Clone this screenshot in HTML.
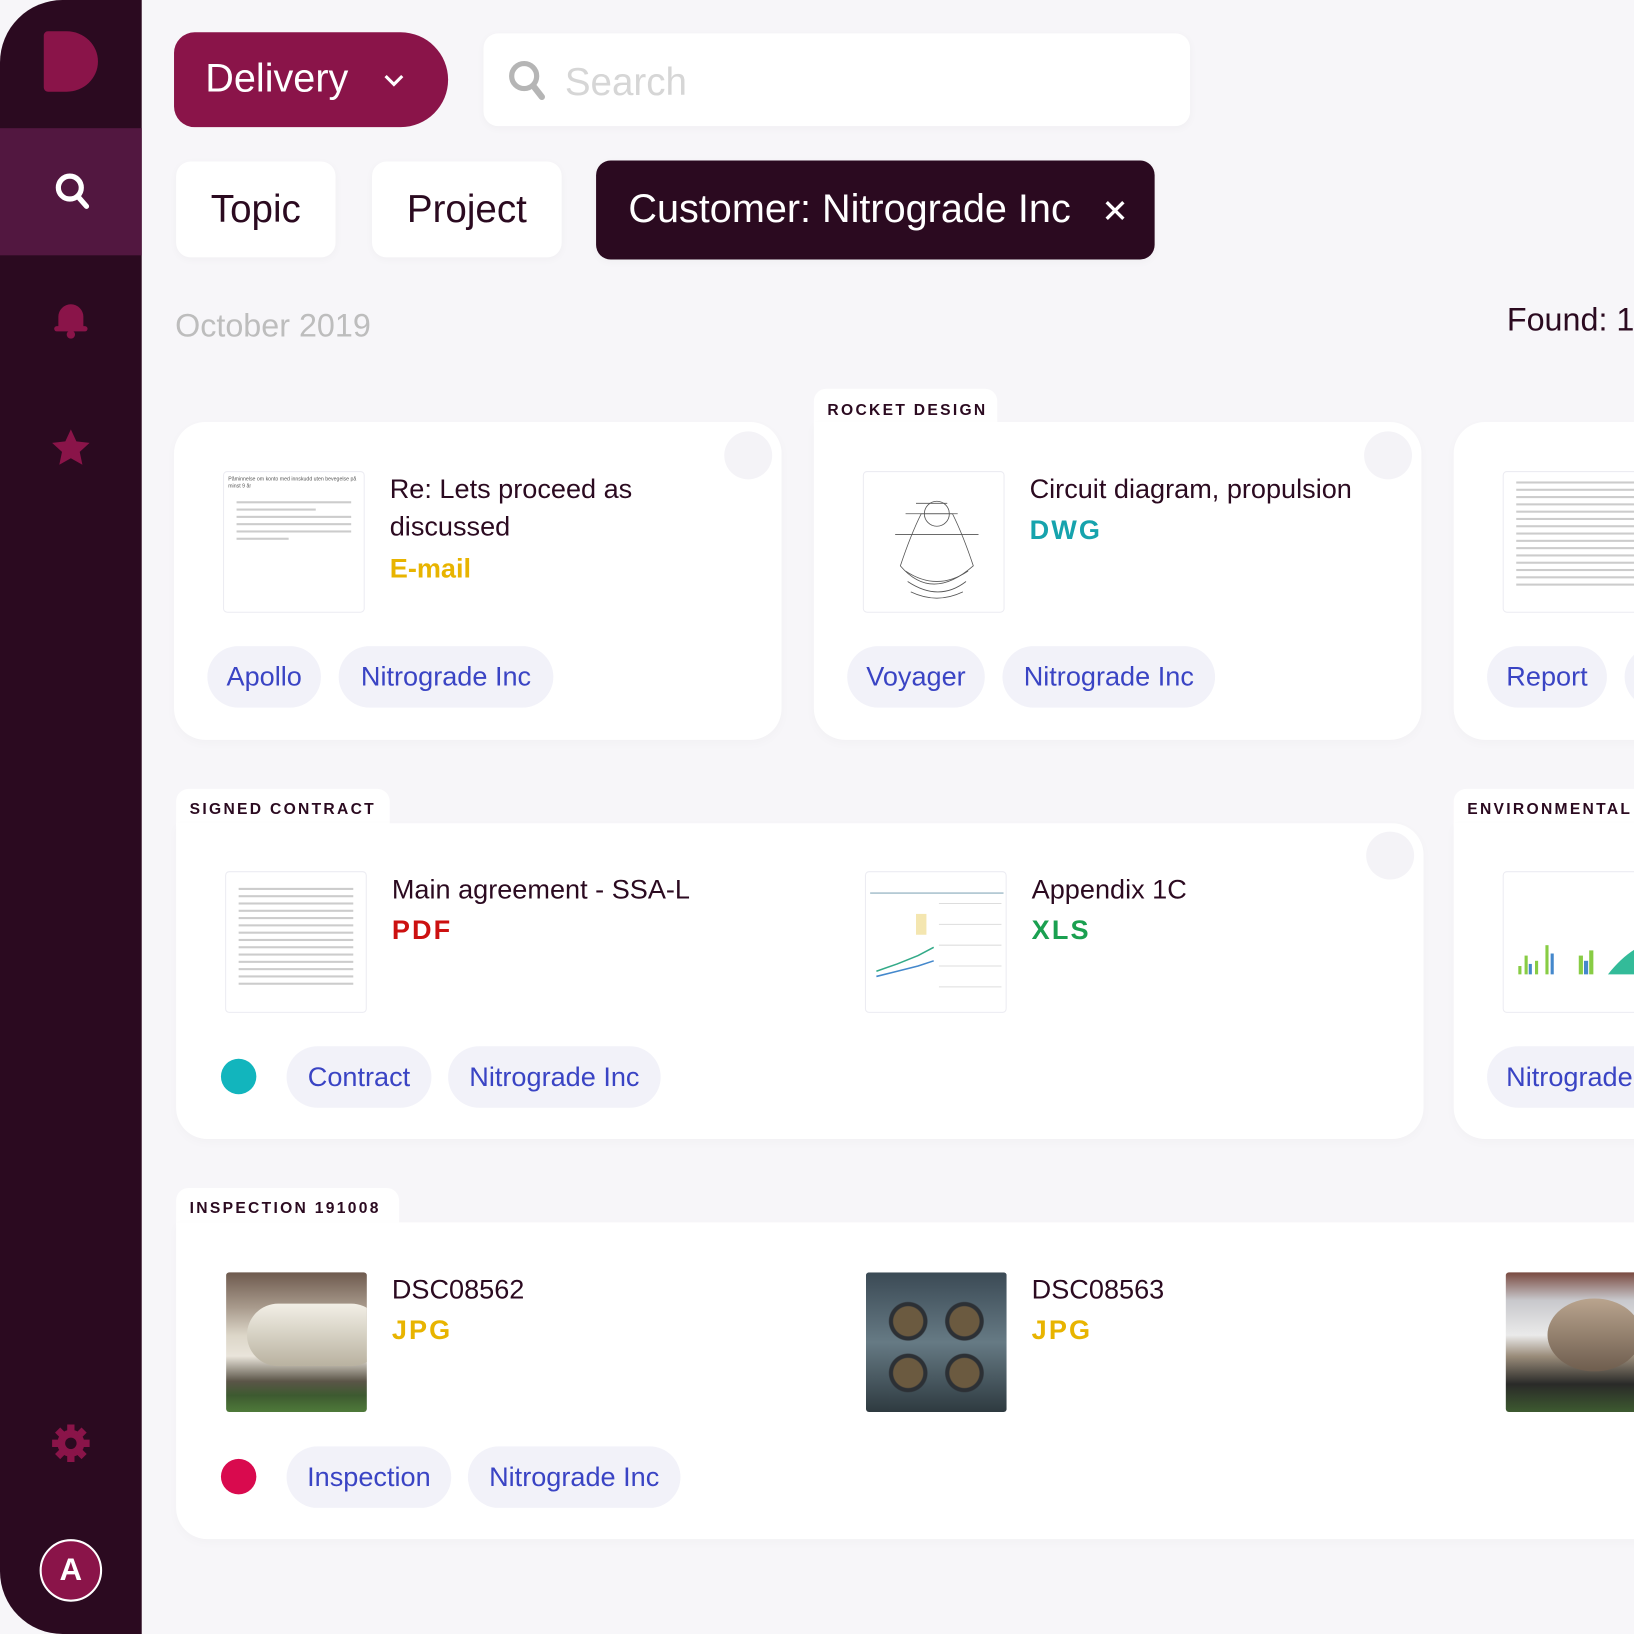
<!DOCTYPE html>
<html><head><meta charset="utf-8">
<style>
html,body{margin:0;padding:0;width:1634px;height:1634px;overflow:hidden;background:#fff;}
#w{position:absolute;left:0;top:0;width:1568px;height:1568px;transform:scale(1.04209);transform-origin:0 0;background:#f7f6f9;font-family:"Liberation Sans",sans-serif;overflow:hidden;}
.a{position:absolute;}
#sb{left:0;top:0;width:136px;height:1568px;background:#2b0a20;border-radius:60px 0 0 60px;}
.pill{position:absolute;background:#fff;border-radius:14px;box-shadow:0 2px 8px rgba(0,0,0,.03);color:#2b0a20;font-size:37px;display:flex;align-items:center;justify-content:center;}
.card{position:absolute;background:#fff;border-radius:30px;box-shadow:0 3px 10px rgba(0,0,0,.025);}
.tab{position:absolute;background:#fff;border-radius:12px 12px 0 0;font-size:15px;font-weight:bold;letter-spacing:2.2px;color:#2b0a20;padding-left:13px;box-sizing:border-box;line-height:40px;white-space:nowrap;}
.th{position:absolute;width:136px;height:136px;border:1.5px solid #ececf2;border-radius:4px;background:#fff;box-sizing:border-box;overflow:hidden;}
.t{position:absolute;font-size:26px;color:#2b0a20;line-height:36px;white-space:nowrap;}
.ty{position:absolute;font-size:26px;font-weight:bold;letter-spacing:2px;}
.tag{position:absolute;height:59px;border-radius:30px;background:#f2f2f9;color:#3a44c4;font-size:26px;display:flex;align-items:center;justify-content:center;white-space:nowrap;}
.circ{position:absolute;width:46px;height:46px;border-radius:50%;background:#f4f3f7;}
.ln{height:2px;background:#ccc;margin:5px 8px;}
</style></head><body><div id="w">
<div id="sb" class="a"></div>
<div class="a" style="left:0;top:123px;width:136px;height:122px;background:#521740"></div>
<div class="a" style="left:42px;top:30px;width:52px;height:58px;background:#8a1449;border-radius:4px 30px 30px 4px/4px 29px 29px 4px"></div>
<svg class="a" style="left:50px;top:163px" width="40" height="40" viewBox="0 0 40 40"><circle cx="17" cy="17" r="11" fill="none" stroke="#fff" stroke-width="5"/><line x1="26" y1="27" x2="33" y2="35" stroke="#fff" stroke-width="5" stroke-linecap="round"/></svg>
<svg class="a" style="left:48px;top:286px" width="40" height="40" viewBox="0 0 40 40"><path d="M8 29 V18 a12 12 0 0 1 24 0 V29 Z" fill="#8a1449"/><rect x="4" y="27" width="32" height="5" rx="2.5" fill="#8a1449"/><circle cx="20" cy="35" r="4" fill="#8a1449"/></svg>
<svg class="a" style="left:48px;top:410px" width="40" height="40" viewBox="0 0 40 40"><path d="M20 2 L25.3 13.6 L38 15 L28.5 23.6 L31.1 36 L20 29.7 L8.9 36 L11.5 23.6 L2 15 L14.7 13.6 Z" fill="#8a1449"/></svg>
<svg class="a" style="left:48px;top:1365px" width="40" height="40" viewBox="0 0 40 40"><g fill="#8a1449"><circle cx="20" cy="20" r="13"/><g stroke="#8a1449" stroke-width="7"><line x1="20" y1="2" x2="20" y2="38"/><line x1="2" y1="20" x2="38" y2="20"/><line x1="7.3" y1="7.3" x2="32.7" y2="32.7"/><line x1="32.7" y1="7.3" x2="7.3" y2="32.7"/></g></g><circle cx="20" cy="20" r="5.5" fill="#2b0a20"/></svg>
<div class="a" style="left:38px;top:1477px;width:56px;height:56px;border:2.5px solid #fff;border-radius:50%;background:#8a1449;color:#fff;font-size:30px;font-weight:bold;display:flex;align-items:center;justify-content:center"><span>A</span></div>

<div class="a" style="left:167px;top:31px;width:263px;height:91px;background:#8a1449;border-radius:20px 46px 46px 20px;color:#fff;font-size:38px;"><span class="a" style="left:30px;top:24px">Delivery</span><svg class="a" style="left:200px;top:38px" width="22" height="16" viewBox="0 0 22 16"><path d="M3 4 L11 12 L19 4" fill="none" stroke="#fff" stroke-width="3"/></svg></div>
<div class="a" style="left:464px;top:32px;width:678px;height:89px;background:#fff;border-radius:14px;box-shadow:0 2px 8px rgba(0,0,0,.03)"><svg class="a" style="left:22px;top:24px" width="42" height="44" viewBox="0 0 42 44"><circle cx="17" cy="17" r="12" fill="none" stroke="#b5b5b5" stroke-width="5"/><line x1="27" y1="28" x2="34" y2="37" stroke="#b5b5b5" stroke-width="6" stroke-linecap="round"/></svg><span class="a" style="left:78px;top:26px;font-size:37px;color:#d6d6d6">Search</span></div>

<div class="pill" style="left:169px;top:155px;width:153px;height:92px">Topic</div>
<div class="pill" style="left:357px;top:155px;width:182px;height:92px">Project</div>
<div class="pill" style="left:572px;top:154px;width:536px;height:95px;background:#2b0a20;color:#fff;justify-content:flex-start"><span style="margin-left:31px;font-size:38px">Customer: Nitrograde Inc</span><svg class="a" style="left:487px;top:37px" width="22" height="22" viewBox="0 0 22 22"><path d="M3 3 L19 19 M19 3 L3 19" stroke="#fff" stroke-width="3.2"/></svg></div>

<div class="a" style="left:168px;top:295px;font-size:31px;color:#bdbdbd">October 2019</div>
<div class="a" style="left:1446px;top:289px;font-size:31px;color:#2b0a20;white-space:nowrap">Found: 1</div>

<!-- row 1 -->
<div class="card" style="left:167px;top:405px;width:583px;height:305px"></div>
<div class="circ" style="left:695px;top:414px"></div>
<div class="th" style="left:214px;top:452px;padding:4px"><div style="font-size:5px;color:#555;line-height:7px">Påminnelse om konto med innskudd uten bevegelse på minst 9 år</div><div class="ln" style="margin-top:10px"></div><div class="ln" style="width:60%"></div><div class="ln"></div><div class="ln"></div><div class="ln"></div><div class="ln" style="width:40%"></div></div>
<div class="t" style="left:374px;top:451px">Re: Lets proceed as<br>discussed</div>
<div class="ty" style="left:374px;top:530px;color:#e8b400;letter-spacing:0">E-mail</div>
<div class="tag" style="left:199px;top:620px;width:109px">Apollo</div>
<div class="tag" style="left:325px;top:620px;width:206px">Nitrograde Inc</div>

<div class="tab" style="left:781px;top:373px;width:176px;height:36px;line-height:42px">ROCKET DESIGN</div>
<div class="card" style="left:781px;top:405px;width:583px;height:305px;border-top-left-radius:0"></div>
<div class="circ" style="left:1309px;top:414px"></div>
<div class="th" style="left:828px;top:452px"><svg width="136" height="136" viewBox="0 0 136 136"><g fill="none" stroke="#555" stroke-width="0.8"><path d="M40 40 h50 M50 30 h30 M30 60 h80"/><path d="M55 40 q-10 20 -20 50 q30 35 70 0 q-10 -30 -20 -50 Z"/><path d="M40 95 q30 20 60 0 M42 105 q30 20 56 0 M45 115 q25 12 50 0"/><circle cx="70" cy="40" r="12"/></g></svg></div>
<div class="t" style="left:988px;top:451px">Circuit diagram, propulsion</div>
<div class="ty" style="left:988px;top:493px;color:#16a3ad">DWG</div>
<div class="tag" style="left:813px;top:620px;width:132px">Voyager</div>
<div class="tag" style="left:962px;top:620px;width:204px">Nitrograde Inc</div>

<div class="card" style="left:1395px;top:405px;width:300px;height:305px"></div>
<div class="th" style="left:1442px;top:452px;width:140px;padding:4px"><div class="ln"></div><div class="ln"></div><div class="ln"></div><div class="ln"></div><div class="ln"></div><div class="ln"></div><div class="ln"></div><div class="ln"></div><div class="ln"></div><div class="ln"></div><div class="ln"></div><div class="ln"></div><div class="ln"></div><div class="ln"></div><div class="ln"></div></div>
<div class="tag" style="left:1427px;top:620px;width:115px">Report</div>
<div class="tag" style="left:1559px;top:620px;width:100px"></div>

<!-- row 2 -->
<div class="tab" style="left:169px;top:757px;width:205px;height:36px">SIGNED CONTRACT</div>
<div class="card" style="left:169px;top:790px;width:1197px;height:303px;border-top-left-radius:0"></div>
<div class="circ" style="left:1311px;top:798px"></div>
<div class="th" style="left:216px;top:836px;padding:10px 4px"><div class="ln"></div><div class="ln"></div><div class="ln"></div><div class="ln"></div><div class="ln"></div><div class="ln"></div><div class="ln"></div><div class="ln"></div><div class="ln"></div><div class="ln"></div><div class="ln"></div><div class="ln"></div><div class="ln"></div><div class="ln"></div></div>
<div class="t" style="left:376px;top:835px">Main agreement - SSA-L</div>
<div class="ty" style="left:376px;top:877px;color:#cc1010">PDF</div>
<div class="th" style="left:830px;top:836px"><svg width="136" height="136" viewBox="0 0 136 136"><line x1="4" y1="20" x2="132" y2="20" stroke="#8ab" /><g stroke="#ddd"><line x1="70" y1="30" x2="130" y2="30"/><line x1="70" y1="50" x2="130" y2="50"/><line x1="70" y1="70" x2="130" y2="70"/><line x1="70" y1="90" x2="130" y2="90"/><line x1="70" y1="110" x2="130" y2="110"/></g><polyline points="10,95 30,88 50,80 65,72" fill="none" stroke="#3a8" stroke-width="1.5"/><polyline points="10,100 30,95 50,90 65,85" fill="none" stroke="#48c" stroke-width="1.5"/><rect x="48" y="40" width="10" height="20" fill="#f4e6b0"/></svg></div>
<div class="t" style="left:990px;top:835px">Appendix 1C</div>
<div class="ty" style="left:990px;top:877px;color:#1aa050">XLS</div>
<div class="a" style="left:212px;top:1016px;width:34px;height:34px;border-radius:50%;background:#12b5bd"></div>
<div class="tag" style="left:275px;top:1004px;width:139px">Contract</div>
<div class="tag" style="left:430px;top:1004px;width:204px">Nitrograde Inc</div>

<div class="tab" style="left:1395px;top:757px;width:200px;height:36px">ENVIRONMENTAL</div>
<div class="card" style="left:1395px;top:790px;width:300px;height:303px;border-top-left-radius:0"></div>
<div class="th" style="left:1442px;top:836px;width:140px"><svg width="140" height="136" viewBox="0 0 140 136"><g fill="#8c4"><rect x="14" y="90" width="3" height="8"/><rect x="20" y="80" width="3" height="18"/><rect x="30" y="85" width="3" height="13"/><rect x="40" y="70" width="3" height="28"/><rect x="72" y="80" width="4" height="18"/><rect x="82" y="75" width="4" height="23"/></g><g fill="#48c"><rect x="24" y="88" width="3" height="10"/><rect x="45" y="78" width="3" height="20"/><rect x="77" y="85" width="4" height="13"/></g><path d="M100 98 q20 -25 40 -30 V98 Z" fill="#3b9"/></svg></div>
<div class="tag" style="left:1427px;top:1004px;width:200px">Nitrograde Inc</div>

<!-- row 3 -->
<div class="tab" style="left:169px;top:1140px;width:214px;height:36px">INSPECTION 191008</div>
<div class="card" style="left:169px;top:1173px;width:1500px;height:304px;border-top-left-radius:0"></div>
<div class="a" style="left:217px;top:1221px;width:135px;height:134px;border-radius:3px;overflow:hidden;background:linear-gradient(180deg,#6e5a4e 0%,#a89a8c 25%,#dcd6c8 45%,#e9e4da 60%,#5b5548 78%,#3d5a30 88%,#4f7a3a 100%)"><div class="a" style="left:20px;top:30px;width:130px;height:60px;border-radius:40px;background:linear-gradient(#f2efe6,#b9b2a0)"></div></div>
<div class="t" style="left:376px;top:1219px">DSC08562</div>
<div class="ty" style="left:376px;top:1261px;color:#e8b400">JPG</div>
<div class="a" style="left:831px;top:1221px;width:135px;height:134px;border-radius:3px;overflow:hidden;background:radial-gradient(circle at 30% 35%,#6b5a40 0 14px,#2c3035 15px 18px,transparent 19px),radial-gradient(circle at 70% 35%,#6b5a40 0 14px,#2c3035 15px 18px,transparent 19px),radial-gradient(circle at 30% 72%,#6b5a40 0 14px,#2c3035 15px 18px,transparent 19px),radial-gradient(circle at 70% 72%,#6b5a40 0 14px,#2c3035 15px 18px,transparent 19px),linear-gradient(#3b4a55,#667a84 50%,#2e3a40)"></div>
<div class="t" style="left:990px;top:1219px">DSC08563</div>
<div class="ty" style="left:990px;top:1261px;color:#e8b400">JPG</div>
<div class="a" style="left:1445px;top:1221px;width:135px;height:134px;border-radius:3px;overflow:hidden;background:linear-gradient(180deg,#7a4a40 0%,#c8c8cc 20%,#eaeaea 45%,#9a8c7a 60%,#2a2a28 80%,#3d5a30 100%)"><div class="a" style="left:40px;top:25px;width:90px;height:70px;border-radius:50%;background:linear-gradient(#b9a48e,#6e5d4e)"></div></div>
<div class="a" style="left:212px;top:1400px;width:34px;height:34px;border-radius:50%;background:#d90a4e"></div>
<div class="tag" style="left:275px;top:1388px;width:158px">Inspection</div>
<div class="tag" style="left:449px;top:1388px;width:204px">Nitrograde Inc</div>
</div></body></html>
